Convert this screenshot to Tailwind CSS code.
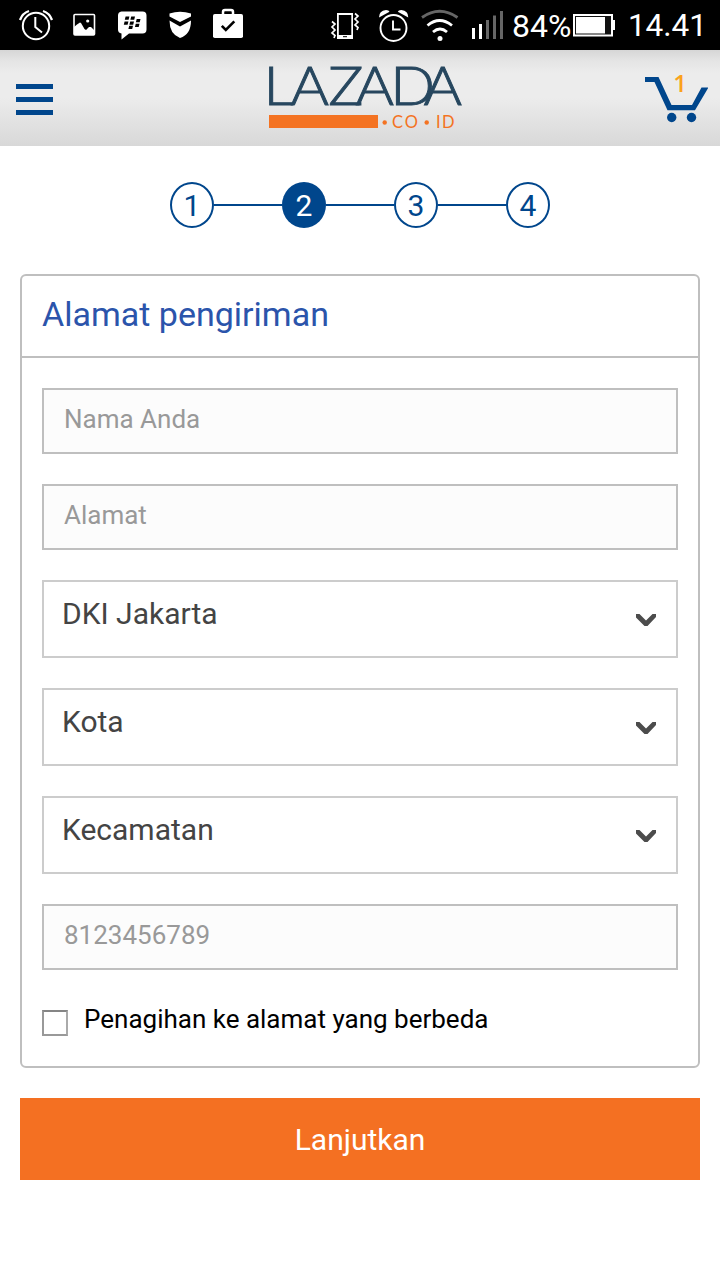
<!DOCTYPE html>
<html lang="id">
<head>
  <meta charset="UTF-8">
  <meta name="viewport" content="width=device-width, initial-scale=1.0">
  <title>Lazada - Alamat pengiriman</title>
  <script src="https://cdn.jsdelivr.net/npm/@tailwindcss/browser@4"></script>
</head>
<body class="h-[1280px] overflow-hidden bg-white font-['Roboto',sans-serif]">

  <!-- Status bar -->
  <div class="flex h-[50px] items-center bg-black pl-[18px] pr-[13px] text-white">
    <svg class="h-[50px] w-9 shrink-0" viewBox="18 0 36 50" fill="none" stroke="#fff" stroke-width="2">
      <circle cx="36" cy="26" r="13.2"/>
      <path d="M35.3 17v10l6.700 5.500"/>
      <path d="M20 20q2.500-7 9-9M52 20q-2.500-7-9-9" stroke-width="2.300"/>
    </svg>
    <svg class="ml-[19px] h-[50px] w-[23px] shrink-0" viewBox="73 0 23 50">
      <rect x="74" y="14.500" width="20.500" height="20.500" rx="1" fill="none" stroke="#fff" stroke-width="1.600"/>
      <path d="M74 27l3-2.500 3-2 1 .5 3.500 6 1.500 1 3-3h2l4 4v4H74z" fill="#fff"/>
      <circle cx="87.700" cy="21" r="1.600" fill="#fff"/>
    </svg>
    <svg class="ml-[21px] h-[50px] w-[31px] shrink-0" viewBox="117 0 31 50">
      <path d="M121.500 11.500h21a4 4 0 0 1 4 4v14a4 4 0 0 1-4 4H129l-7.500 6v-6a4 4 0 0 1-3.500-4v-14a4 4 0 0 1 3.500-4z" fill="#fff"/>
      <path d="M125.600 16.500h3.800l-.8 3.200h-3.800zM131.200 16.500h3.800l-.8 3.200h-3.800zM124.600 21.600h3.800l-.8 3.200h-3.800zM130.200 21.600h3.800l-.8 3.200h-3.800zM136.700 19h3.800l-.8 3.200h-3.800zM135.700 23.800h3.800l-.8 3.200H135zM129.200 25.800h3.800l-.8 3.200h-3.800z" fill="#000"/>
    </svg>
    <svg class="ml-5 h-[50px] w-6 shrink-0" viewBox="168 0 24 50" fill="#fff">
      <path d="M169.500 13.500q10.500-3.500 21.500 0v3L180 22l-10.500-5.500z"/>
      <path d="M169.500 20.500L180 26.500l11-6q0 14-11 17.500-10.500-4-10.500-17.500z"/>
    </svg>
    <svg class="ml-[21px] h-[50px] w-[31px] shrink-0" viewBox="213 0 31 50">
      <path d="M223 15v-3q0-2 2-2h6q2 0 2 2v3" fill="none" stroke="#fff" stroke-width="2.500"/>
      <rect x="213" y="14" width="30" height="24" rx="1.800" fill="#fff"/>
      <path d="M221.800 25.800l4 4 8.500-8.500" fill="none" stroke="#000" stroke-width="2.600"/>
    </svg>

    <svg class="ml-[86px] h-[50px] w-[30px] shrink-0" viewBox="330 0 30 50">
      <path d="M337 13h16v26h-16zM338.800 15v20h12.500V15z" fill="#fff" fill-rule="evenodd"/>
      <path d="M343 36.700h4" stroke="#000" stroke-width="1"/>
      <path d="M332 21.500l3 2.500-3 3 3 3-3 3 3 2.500-1 2.500M355 13.500l3 2.500-3 3 3 3-3 3 3 2.500-1 2.500" fill="none" stroke="#fff" stroke-width="1.700"/>
    </svg>
    <svg class="ml-[18px] h-[50px] w-8 shrink-0" viewBox="378 0 32 50">
      <circle cx="393.500" cy="28" r="13" fill="none" stroke="#fff" stroke-width="1.900"/>
      <path d="M393 20.500V29.500h7.500" fill="none" stroke="#fff" stroke-width="1.900"/>
      <path d="M379 17.500q0-7 7-7.500 3 0 3.500 1.800zM408.300 17.500q0-7-7-7.500-3 0-3.500 1.800z" fill="#fff"/>
    </svg>
    <svg class="ml-[11px] h-[50px] w-[38px] shrink-0" viewBox="421 0 38 50" fill="none" stroke-width="2.800">
      <path d="M422 17.500q17.500-12.500 35.500 0" stroke="#666"/>
      <path d="M427.500 25.500q12-10 24.500 0M433 32q7-6 14 0" stroke="#fff"/>
      <circle cx="440" cy="38.500" r="2.500" fill="#fff" stroke="none"/>
    </svg>
    <svg class="ml-[12px] h-[50px] w-[33px] shrink-0" viewBox="471 0 33 50">
      <path d="M472 28h3v11h-3zM479 24h3v15h-3z" fill="#fff"/>
      <path d="M486 20h3v19h-3zM493 15.500h3V39h-3zM500 11h3v28h-3z" fill="#666"/>
    </svg>
    <span class="ml-2 w-[61px] whitespace-nowrap pt-0.5 text-[32px] leading-[50px]">84%</span>
    <svg class="h-[50px] w-[43px] shrink-0" viewBox="573 0 43 50">
      <path d="M574 15h38v20.500h-38z" fill="#111" stroke="#fff" stroke-width="2"/>
      <path d="M576 17h29v16.500h-29zM612 20h3v10h-3z" fill="#fff"/>
    </svg>
    <span class="ml-auto whitespace-nowrap pt-0.5 text-[31.500px] leading-[52px]">14.41</span>
  </div>

  <!-- Header -->
  <header class="flex h-24 bg-[linear-gradient(to_bottom,#d6d6d6_0%,#e4e4e4_11%,#ececec_24%,#ececec_50%,#d8d8d8_100%)] pl-4 pr-3">
    <button class="mt-[34px] flex h-[31px] w-[37px] flex-col justify-between">
      <span class="h-[5px] w-full bg-[#00468c]"></span>
      <span class="h-[5px] w-full bg-[#00468c]"></span>
      <span class="h-[5px] w-full bg-[#00468c]"></span>
    </button>
    <svg class="ml-[207px] h-24 w-[210px]" viewBox="260 50 210 96">
      <!-- letters are stretched a little, x runs from the left edge of the mark -->
      <text transform="translate(269 105) scale(1.12 1)" x="-5 19.200 53 77.200 108.200 138" y="0" font-family="Lato" font-weight="300" font-size="52.500" fill="#27475f" stroke="#27475f" stroke-width=".9">LAZADA</text>
      <rect x="269" y="115" width="109" height="13" fill="#f47322"/>
      <circle cx="384.700" cy="122.500" r="2.200" fill="#f47322"/>
      <circle cx="426.700" cy="122.500" r="2.200" fill="#f47322"/>
      <text x="392 404.700" y="127.800" font-family="Lato" font-size="16.500" fill="#f47322">CO</text>
      <text x="436 442" y="127.800" font-family="Lato" font-size="16.500" fill="#f47322">ID</text>
    </svg>
    <svg class="ml-auto h-24 w-16" viewBox="644 50 64 96">
      <path d="M645 77h13.500l13 28h20.500l9.500-17.500h7L695 110.300h-27.500L654.500 82H645z" fill="#00468c"/>
      <circle cx="671.700" cy="117.500" r="4.700" fill="#00468c"/>
      <circle cx="691.500" cy="117.500" r="4.700" fill="#00468c"/>
      <text x="680" y="92" text-anchor="middle" font-family="Open Sans" font-weight="600" font-size="24" fill="#faa21b">1</text>
    </svg>
  </header>

  <!-- Checkout steps -->
  <div class="mt-9 flex items-center justify-center text-[30px] text-[#00468c]">
    <span class="flex h-[46px] w-11 items-center justify-center rounded-[50%] border-2 border-[#00468c] pt-px">1</span>
    <span class="h-0.5 w-[68px] bg-[#00468c]"></span>
    <span class="flex h-[46px] w-11 items-center justify-center rounded-[50%] bg-[#00468c] pt-px text-white">2</span>
    <span class="h-0.5 w-[68px] bg-[#00468c]"></span>
    <span class="flex h-[46px] w-11 items-center justify-center rounded-[50%] border-2 border-[#00468c] pt-px">3</span>
    <span class="h-0.5 w-[68px] bg-[#00468c]"></span>
    <span class="flex h-[46px] w-11 items-center justify-center rounded-[50%] border-2 border-[#00468c] pt-px">4</span>
  </div>

  <form class="mx-5 mt-[46px]">
    <div class="h-[794px] rounded-md border-2 border-[#bfbfbf]">
      <h1 class="h-[82px] border-b-2 border-[#bfbfbf] pl-5 text-[34px] leading-[76px] text-[#2b54ab]">Alamat pengiriman</h1>

      <div class="flex flex-col gap-[30px] px-5 pt-[30px]">
        <input type="text" placeholder="Nama Anda" class="h-[66px] w-full border-2 border-[#bfbfbf] bg-[#fcfcfc] px-5 pb-1 text-[26px] placeholder:text-[#999]">
        <input type="text" placeholder="Alamat" class="h-[66px] w-full border-2 border-[#bfbfbf] bg-[#fcfcfc] px-5 pb-1 text-[26px] placeholder:text-[#999]">

        <div class="flex h-[78px] items-center justify-between border-2 border-[#ccc] pl-[18px] pr-[19px] text-[30px] text-[#444]">
          <span class="pb-3">DKI Jakarta</span>
          <svg class="mt-0.5 h-3 w-[22px]" viewBox="0 0 22 12"><path d="M1 0h3.500L11 6.500 17.500 0H21v3L12.500 12h-3L1 3.500z" fill="#4c4c4c"/></svg>
        </div>
        <div class="flex h-[78px] items-center justify-between border-2 border-[#ccc] pl-[18px] pr-[19px] text-[30px] text-[#444]">
          <span class="pb-3">Kota</span>
          <svg class="mt-0.5 h-3 w-[22px]" viewBox="0 0 22 12"><path d="M1 0h3.500L11 6.500 17.500 0H21v3L12.500 12h-3L1 3.500z" fill="#4c4c4c"/></svg>
        </div>
        <div class="flex h-[78px] items-center justify-between border-2 border-[#ccc] pl-[18px] pr-[19px] text-[30px] text-[#444]">
          <span class="pb-3">Kecamatan</span>
          <svg class="mt-0.5 h-3 w-[22px]" viewBox="0 0 22 12"><path d="M1 0h3.500L11 6.500 17.500 0H21v3L12.500 12h-3L1 3.500z" fill="#4c4c4c"/></svg>
        </div>

        <input type="tel" placeholder="8123456789" class="h-[66px] w-full border-2 border-[#bfbfbf] bg-[#fcfcfc] px-5 pb-1 text-[26px] placeholder:text-[#999]">
      </div>

      <label class="mt-[29px] flex items-center px-5 text-[26px] leading-[40px] text-black">
        <input type="checkbox" class="mt-[7px] size-[26px] appearance-none border-2 border-[#999] border-t-[#858585] border-r-[#aaa]">
        <span class="ml-4">Penagihan ke alamat yang berbeda</span>
      </label>
    </div>

    <button type="button" class="mt-[30px] h-[82px] w-full bg-[#f47022] text-[30px] text-white">Lanjutkan</button>
  </form>

</body>
</html>
